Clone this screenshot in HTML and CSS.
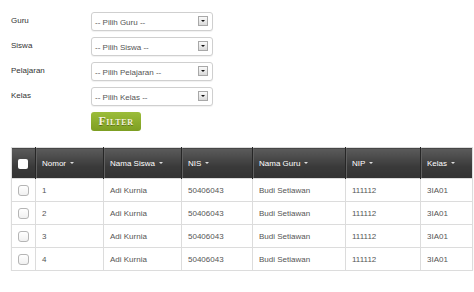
FILE: index.html
```html
<!DOCTYPE html>
<html lang="en">
<head>
    <meta charset="UTF-8">
    <title>Data Kelas</title>
    <link rel="stylesheet" href="styles.css">
</head>
<body>
    <div class="filter-form">
        <label class="filter-label">Guru</label>
        <div class="select-box"><span>-- Pilih Guru --</span><i class="select-arrow"></i></div>

        <label class="filter-label">Siswa</label>
        <div class="select-box"><span>-- Pilih Siswa --</span><i class="select-arrow"></i></div>

        <label class="filter-label">Pelajaran</label>
        <div class="select-box"><span>-- Pilih Pelajaran --</span><i class="select-arrow"></i></div>

        <label class="filter-label">Kelas</label>
        <div class="select-box"><span>-- Pilih Kelas --</span><i class="select-arrow"></i></div>

        <button class="filter-button">Filter</button>
    </div>

    <table class="data-table">
        <colgroup>
            <col class="col-check">
            <col class="col-nomor">
            <col class="col-siswa">
            <col class="col-nis">
            <col class="col-guru">
            <col class="col-nip">
            <col class="col-kelas">
        </colgroup>
        <thead>
            <tr>
                <th class="check-col"><span class="check-head"></span></th>
                <th class="sortable">Nomor</th>
                <th class="sortable">Nama Siswa</th>
                <th class="sortable">NIS</th>
                <th class="sortable">Nama Guru</th>
                <th class="sortable">NIP</th>
                <th class="sortable">Kelas</th>
            </tr>
        </thead>
        <tbody>
            <tr>
                <td class="check-col"><span class="check-box"></span></td>
                <td>1</td><td>Adi Kurnia</td><td>50406043</td><td>Budi Setiawan</td><td>111112</td><td>3IA01</td>
            </tr>
            <tr>
                <td class="check-col"><span class="check-box"></span></td>
                <td>2</td><td>Adi Kurnia</td><td>50406043</td><td>Budi Setiawan</td><td>111112</td><td>3IA01</td>
            </tr>
            <tr>
                <td class="check-col"><span class="check-box"></span></td>
                <td>3</td><td>Adi Kurnia</td><td>50406043</td><td>Budi Setiawan</td><td>111112</td><td>3IA01</td>
            </tr>
            <tr>
                <td class="check-col"><span class="check-box"></span></td>
                <td>4</td><td>Adi Kurnia</td><td>50406043</td><td>Budi Setiawan</td><td>111112</td><td>3IA01</td>
            </tr>
        </tbody>
    </table>
</body>
</html>
```

FILE: styles.css
```css
  body {
      font-family: "Liberation Sans", Arial, sans-serif;
      font-size: 8px;
      margin: 0;
      padding: 0;
      background-color: #fff;
      color: #333;
  }

  .filter-form {
      display: grid;
      grid-template-columns: 80px 122px;
      row-gap: 6px;
      padding-top: 12px;
      margin-left: 11px;
  }
  .filter-label {
      line-height: 10px;
      padding-top: 4px;
      color: #333;
  }
  .select-box {
      position: relative;
      box-sizing: border-box;
      height: 19px;
      border: 1px solid #cfcfcf;
      border-radius: 3px;
      background-color: #fff;
      box-shadow: 0 1px 1px rgba(0, 0, 0, 0.06);
      padding: 5px 0 0 3px;
      line-height: 10px;
      color: #555;
  }
  .select-arrow {
      position: absolute;
      top: 3px;
      right: 4px;
      box-sizing: border-box;
      width: 10px;
      height: 10px;
      border: 1px solid #a8a8a8;
      background: linear-gradient(#fafafa, #d9d9d9);
  }
  .select-arrow::after {
      content: "";
      position: absolute;
      left: 2px;
      top: 3px;
      border-left: 2px solid transparent;
      border-right: 2px solid transparent;
      border-top: 2px solid #111;
      width: 0;
      height: 0;
  }

  .filter-button {
      grid-column: 2;
      justify-self: start;
      width: 50px;
      height: 19px;
      padding: 0;
      border: none;
      border-radius: 3px;
      background: linear-gradient(#9cbd3a, #7d9e22);
      color: #f6f3df;
      font-family: "Liberation Serif", "Times New Roman", serif;
      font-size: 12px;
      font-weight: bold;
      font-variant: small-caps;
      letter-spacing: 0.6px;
      text-shadow: 0 1px 0 rgba(0, 0, 0, 0.35);
      cursor: pointer;
  }

  .data-table {
      margin: 16px 0 0 11px;
      width: 461px;
      border-collapse: collapse;
      table-layout: fixed;
      border: 1px solid #dcdcdc;
      box-shadow: 0 1px 2px rgba(0, 0, 0, 0.05);
  }
  .col-check { width: 24px; }
  .col-nomor { width: 68px; }
  .col-siswa { width: 78px; }
  .col-nis { width: 71px; }
  .col-guru { width: 93px; }
  .col-nip { width: 75px; }
  .col-kelas { width: 52px; }

  .data-table th,
  .data-table td {
      box-sizing: border-box;
      padding: 0 6px;
      text-align: left;
      white-space: nowrap;
      overflow: hidden;
  }
  .data-table th {
      height: 31px;
      font-weight: normal;
      color: #fff;
      background: linear-gradient(#5c5c5c, #3a3a3a 60%, #323232);
      border-left: 1px solid #262626;
      box-shadow: inset 1px 0 0 #606060;
  }
  .data-table th:first-child {
      border-left: none;
      box-shadow: none;
  }
  .sortable::after {
      content: "";
      display: inline-block;
      margin-left: 4px;
      vertical-align: middle;
      border-left: 2px solid transparent;
      border-right: 2px solid transparent;
      border-top: 2px solid #ddd;
  }
  .data-table td {
      height: 23px;
      color: #555;
      border-top: 1px solid #dcdcdc;
      border-left: 1px solid #dcdcdc;
  }
  .data-table .check-col {
      padding: 0;
      text-align: center;
  }

  .check-head {
      display: inline-block;
      width: 10px;
      height: 10px;
      margin: 1px 2px 0 0;
      vertical-align: middle;
      border-radius: 2px;
      background-color: #fff;
  }
  .check-box {
      display: inline-block;
      box-sizing: border-box;
      width: 11px;
      height: 11px;
      margin-top: 1px;
      vertical-align: middle;
      border: 1px solid #b5b5b5;
      border-radius: 3px;
      background: linear-gradient(#fff, #f0f0f0);
  }
```
